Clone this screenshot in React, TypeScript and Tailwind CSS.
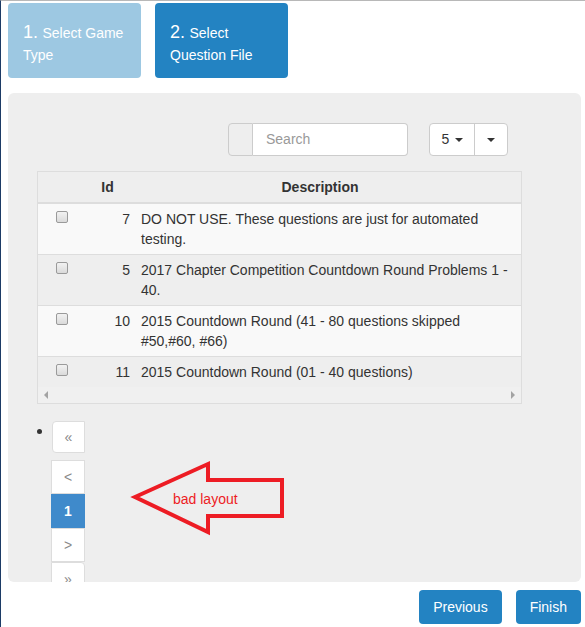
type Row = {
  id: number;
  description: string;
};

const rows: Row[] = [
  { id: 7, description: "DO NOT USE. These questions are just for automated testing." },
  { id: 5, description: "2017 Chapter Competition Countdown Round Problems 1 - 40." },
  { id: 10, description: "2015 Countdown Round (41 - 80 questions skipped #50,#60, #66)" },
  { id: 11, description: "2015 Countdown Round (01 - 40 questions)" },
];

function Caret() {
  return (
    <span className="inline-block h-0 w-0 border-x-[4px] border-t-[4px] border-x-transparent border-t-[#333]" />
  );
}

function StepBox({ num, label, active }: { num: number; label: string; active: boolean }) {
  return (
    <div
      className={[
        "h-[75px] w-[133px] rounded-[4px] px-[15px] pt-[18px] leading-[22px] text-white",
        active ? "bg-[#2383c2]" : "bg-[#9dc8e2]",
      ].join(" ")}
    >
      <span className="text-[18px]">{num}.</span>{" "}
      <span className="text-[14px]">{label}</span>
    </div>
  );
}

function Checkbox() {
  return (
    <span className="mt-[2px] block h-[12px] w-[12px] rounded-[2px] border border-[#9a9a9a] bg-gradient-to-b from-[#f2f2f2] to-[#dadada]" />
  );
}

function PageBox({
  children,
  className,
}: {
  children: React.ReactNode;
  className: string;
}) {
  return (
    <div
      className={[
        "flex items-center justify-center border text-[14px]",
        className,
      ].join(" ")}
    >
      {children}
    </div>
  );
}

export default function App() {
  return (
    <div className="h-[627px] w-[585px] overflow-hidden border-l border-t border-l-[#1c3b66] border-t-[#b8b8b8] bg-white font-['Liberation_Sans',Arial,sans-serif] text-[#333]">

      {/* wizard steps */}
      <div className="flex gap-[14px] pl-[7px] pt-[2px]">
        <StepBox num={1} label="Select Game Type" active={false} />
        <StepBox num={2} label="Select Question File" active={true} />
      </div>

      {/* panel */}
      <div className="relative ml-[7px] mt-[15px] h-[489px] w-[573px] overflow-hidden rounded-[6px] bg-[#eeeeee] pl-[29px] pt-[30px]">

        {/* toolbar */}
        <div className="flex w-[485px] justify-end gap-[21px] pr-[14px]">
          <div className="flex h-[33px]">
            <span className="w-[25px] rounded-l-[4px] border border-[#ccc] bg-[#eee]" />
            <input
              placeholder="Search"
              className="w-[155px] rounded-r-[4px] border border-l-0 border-[#ccc] bg-white px-[13px] text-[14px] text-[#555] outline-none placeholder:text-[#999]"
            />
          </div>
          <div className="flex h-[33px] rounded-[4px] border border-[#ccc] bg-white text-[14px]">
            <div className="flex w-[45px] items-center justify-center gap-[6px] border-r border-[#ccc] pl-[1px]">
              <span>5</span>
              <Caret />
            </div>
            <div className="flex w-[32px] items-center justify-center">
              <Caret />
            </div>
          </div>
        </div>

        {/* table */}
        <div className="mt-[15px] w-[485px] border border-[#ddd]">
          <table className="w-[483px] table-fixed border-collapse text-[14px] leading-[20px]">
            <colgroup>
              <col className="w-[48px]" />
              <col className="w-[50px]" />
              <col />
            </colgroup>
            <thead>
              <tr>
                <th className="border-b-2 border-[#ddd] p-[5px]" />
                <th className="border-b-2 border-[#ddd] py-[5px] pl-[5px] pr-[12px] text-center font-bold">
                  Id
                </th>
                <th className="border-b-2 border-[#ddd] py-[5px] pl-[5px] pr-[22px] text-center font-bold">
                  Description
                </th>
              </tr>
            </thead>
            <tbody>
              {rows.map((row, index) => (
                <tr
                  key={row.id}
                  className={index % 2 === 0 ? "bg-[#f9f9f9]" : "bg-[#eeeeee]"}
                >
                  <td className="border-t border-[#ddd] py-[5px] pl-[18px] align-top">
                    <Checkbox />
                  </td>
                  <td className="border-t border-[#ddd] py-[5px] pr-[6px] text-right align-top">
                    {row.id}
                  </td>
                  <td className="border-t border-[#ddd] p-[5px] align-top">
                    <div className="w-[372px]">{row.description}</div>
                  </td>
                </tr>
              ))}
            </tbody>
          </table>
          <div className="flex h-[16px] items-center justify-between bg-[#f0f0f0] px-[6px]">
            <span className="h-0 w-0 border-y-[4px] border-r-[4px] border-y-transparent border-r-[#a3a3a3]" />
            <span className="h-0 w-0 border-y-[4px] border-l-[4px] border-y-transparent border-l-[#a3a3a3]" />
          </div>
        </div>

        {/* broken pagination */}
        <div className="mt-[17px] flex">
          <span className="mt-[8px] h-[5px] w-[5px] rounded-full bg-[#333]" />
          <div className="ml-[9px] flex flex-col">
            <PageBox className="ml-[1px] h-[32px] w-[33px] rounded-l-[4px] border-[#ddd] bg-white text-[#8a8a8a]">
              «
            </PageBox>
            <PageBox className="mt-[7px] h-[34px] w-[34px] border-[#ddd] bg-white text-[#8a8a8a]">
              &lt;
            </PageBox>
            <PageBox className="h-[34px] w-[34px] border-[#3f8acb] bg-[#3f8acb] font-bold text-white">
              1
            </PageBox>
            <PageBox className="h-[34px] w-[34px] border-[#ddd] bg-white text-[#8a8a8a]">
              &gt;
            </PageBox>
            <PageBox className="h-[34px] w-[34px] rounded-r-[4px] border-[#ddd] bg-white text-[#8a8a8a]">
              »
            </PageBox>
          </div>
        </div>

        {/* annotation */}
        <svg
          className="pointer-events-none absolute left-0 top-0"
          width="573"
          height="489"
          viewBox="0 0 573 489"
        >
          <polygon
            points="127,404 200,371 200,387 274,387 274,423 200,423 200,439"
            fill="none"
            stroke="#ed1c24"
            strokeWidth="4"
            strokeLinejoin="miter"
          />
        </svg>
        <span className="absolute left-[165px] top-[398px] text-[14px] leading-[16px] text-[#ed1c24]">
          bad layout
        </span>
      </div>

      {/* footer buttons */}
      <div className="ml-[7px] mt-[8px] flex w-[573px] justify-end gap-[14px]">
        <button
          type="button"
          className="h-[34px] rounded-[4px] bg-[#2383c2] px-[14px] text-[14px] text-white"
        >
          Previous
        </button>
        <button
          type="button"
          className="h-[34px] rounded-[4px] bg-[#2383c2] px-[14px] text-[14px] text-white"
        >
          Finish
        </button>
      </div>
    </div>
  );
}
